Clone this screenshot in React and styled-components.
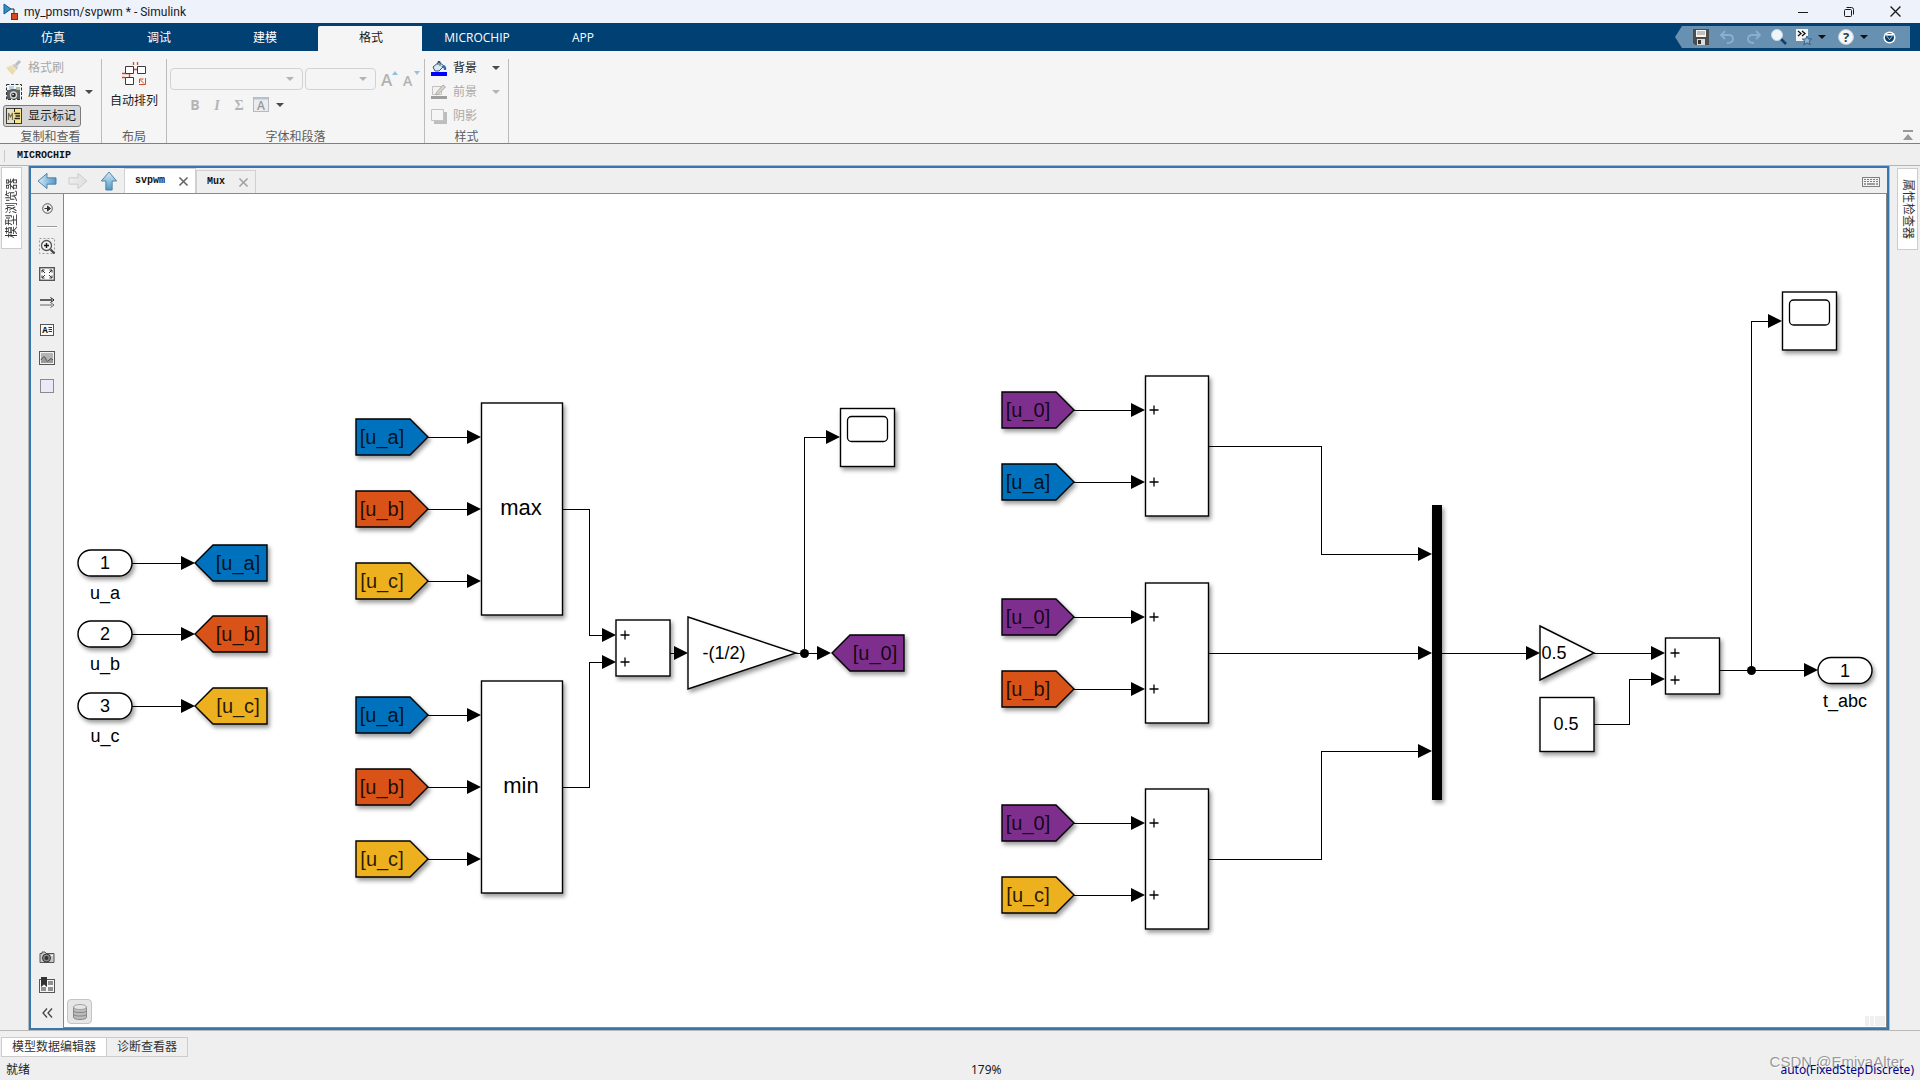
import React from "react";
import styled, { createGlobalStyle } from "styled-components";

const GlobalStyle = createGlobalStyle`
	* {
		box-sizing: border-box;
	}
	body {
		margin: 0;
		background: #efefef;
		color: #1a1a1a;
		font-family: "Open Sans", "Noto Sans CJK SC", sans-serif;
		font-size: 12px;
		line-height: 16px;
	}
	button {
		margin: 0;
		padding: 0;
		border: none;
		background: none;
		color: inherit;
		font: inherit;
		white-space: nowrap;
	}
	svg {
		display: block;
		flex-shrink: 0;
		overflow: visible;
	}
`;

const Page = styled.div`
	display: flex;
	flex-direction: column;
	min-height: 100vh;
`;

const TitleBar = styled.header`
	display: flex;
	align-items: center;
	height: 23px;
	padding: 0 2px 0 3px;
	background: #eef2fa;
`;

const Title = styled.h1`
	flex: 1;
	margin: 0 0 0 6px;
	font-family: Roboto, sans-serif;
	font-size: 12px;
	font-weight: 400;
`;

const WindowButton = styled.button`
	display: flex;
	align-items: center;
	justify-content: center;
	width: 46px;
	height: 22px;
`;

const TabBar = styled.nav`
	display: flex;
	align-items: flex-end;
	height: 28px;
	background: #004073;
`;

const RibbonTab = styled.button`
	width: 106px;
	height: 25px;
	padding: 0 0 2px 2px;
	border-radius: 2px 2px 0 0;
	border-right: 2px solid #004073;
	background: ${(props) => (props.$active ? "#f5f5f5" : "#004073")};
	color: ${(props) => (props.$active ? "#1a1a1a" : "#ffffff")};
`;

const QuickAccess = styled.div`
	display: flex;
	align-items: center;
	gap: 4px;
	height: 22px;
	margin: 0 10px 3px auto;
	padding: 0 10px 0 15px;
	background: #6890b0;
	clip-path: polygon(7px 0, 100% 0, 100% 100%, 7px 100%, 0 50%);
`;

const QuickButton = styled.button`
	display: flex;
	align-items: center;
	justify-content: center;
	gap: 6px;
	min-width: 22px;
	height: 20px;
	padding: ${(props) => (props.$menu ? "0 2px" : "0")};
`;

const Ribbon = styled.div`
	display: flex;
	height: 93px;
	padding-top: 8px;
	border-bottom: 1px solid #808080;
	background: #f5f5f5;
`;

const Group = styled.section`
	display: flex;
	flex-direction: column;
	width: ${(props) => props.$width}px;
	border-right: 1px solid #bcbcbc;
`;

const GroupBody = styled.div`
	flex: 1;
	display: flex;
	flex-direction: column;
	gap: ${(props) => props.$gap || 0}px;
	padding: ${(props) => props.$pad || "0 3px"};
`;

const GroupLabel = styled.h2`
	margin: 0;
	height: 15px;
	font-size: 12px;
	font-weight: 400;
	line-height: 18px;
	color: #5c5c5c;
	text-align: center;
`;

const RibbonRow = styled.div`
	display: flex;
	align-items: center;
	gap: ${(props) => props.$gap || 0}px;
	height: 24px;
	margin-top: ${(props) => (props.$first ? "-3px" : "0")};
`;

const ToolButton = styled.button`
	display: flex;
	align-items: center;
	gap: 6px;
	height: 22px;
	padding: 0 4px 0 2px;
	border: 1px solid ${(props) => (props.$pressed ? "#7c7c7c" : "transparent")};
	border-radius: 3px;
	background: ${(props) => (props.$pressed ? "#d6d6d6" : "transparent")};
	color: ${(props) => (props.disabled ? "#a8a8a8" : "#1a1a1a")};
`;

const BigButton = styled.button`
	display: flex;
	flex-direction: column;
	align-items: center;
	gap: 7px;
`;

const IconButton = styled.button`
	display: flex;
	align-items: center;
	justify-content: center;
	width: ${(props) => props.$width || 22}px;
	height: 22px;
`;

const SelectBox = styled.span`
	position: relative;
	width: ${(props) => props.$width}px;
`;

const Select = styled.select`
	display: block;
	width: 100%;
	height: 22px;
	border: 1px solid #c4c4c4;
	border-radius: 4px;
	background: #f5f5f5;
	appearance: none;
`;

const SelectCaret = styled.span`
	position: absolute;
	right: 9px;
	top: 9px;
`;

const RibbonEnd = styled.div`
	flex: 1;
	display: flex;
	justify-content: flex-end;
	align-items: flex-end;
	padding: 0 7px 3px 0;
`;

const Strip = styled.div`
	display: flex;
	align-items: center;
	gap: 12px;
	height: 22px;
	padding: 2px 0 0 4px;
	border-bottom: 1px solid #b4b4b4;
	font-family: "Liberation Mono", monospace;
	font-size: 10px;
	font-weight: 700;
	color: #111111;
`;

const Grip = styled.span`
	width: 1px;
	height: 12px;
	background: #c8c8c8;
`;

const Main = styled.main`
	flex: 1;
	display: flex;
	border-bottom: 1px solid #b8b8b8;
`;

const Dock = styled.aside`
	width: ${(props) => (props.$right ? 31 : 29)}px;
	padding: ${(props) => (props.$right ? "2px 2px 0 7px" : "1px 6px 0 1px")};
	border: solid #b8b8b8;
	border-width: ${(props) => (props.$right ? "0 0 0 1px" : "0 1px 0 0")};
`;

const DockTab = styled.button`
	width: 21px;
	height: 82px;
	border: 1px solid #cccccc;
	background: #ffffff;
	color: #333333;
	writing-mode: vertical-rl;
	text-orientation: sideways;
	transform: ${(props) => (props.$up ? "rotate(180deg)" : "none")};
`;

const Editor = styled.section`
	flex: 1;
	display: flex;
	flex-direction: column;
	min-width: 0;
	border: 2px solid #3577ae;
`;

const EditorBar = styled.div`
	display: flex;
	align-items: flex-end;
	height: 26px;
	padding-right: 7px;
	border-bottom: 1px solid #888a8f;
`;

const NavButton = styled.button`
	display: flex;
	align-items: center;
	justify-content: center;
	width: 31px;
	height: 24px;
`;

const FileTab = styled.button`
	display: flex;
	align-items: center;
	gap: 14px;
	height: ${(props) => (props.$active ? 25 : 23)}px;
	padding: 0 7px 0 10px;
	border: 1px solid #d0d0d0;
	border-bottom: none;
	background: ${(props) => (props.$active ? "#ffffff" : "#efefef")};
	font-family: "Liberation Mono", monospace;
	font-size: 10px;
	font-weight: 700;
	color: #111111;
`;

const BarEnd = styled.div`
	flex: 1;
	display: flex;
	justify-content: flex-end;
	padding-bottom: 6px;
`;

const EditorBody = styled.div`
	flex: 1;
	display: flex;
`;

const Palette = styled.div`
	display: flex;
	flex-direction: column;
	align-items: center;
	width: 32px;
	padding-bottom: 1px;
`;

const PaletteButton = styled.button`
	display: flex;
	align-items: center;
	justify-content: center;
	width: 28px;
	height: 28px;
`;

const PaletteLine = styled.span`
	width: 20px;
	height: 2px;
	margin: 4px 0;
	border-top: 1px solid #9c9c9c;
	background: #ffffff;
`;

const Spacer = styled.span`
	flex: 1;
`;

const Sheet = styled.div`
	position: relative;
	flex: 1;
	display: flex;
	min-width: 0;
	min-height: 780px;
	border: 1px solid #85858a;
	border-top: none;
	background: #ffffff;
`;

const Diagram = styled.svg`
	flex: 1;
	min-width: 0;
	overflow: hidden;
	font-family: "Liberation Sans", Arial, sans-serif;
	text-anchor: middle;
`;

const Shadow = styled.g`
	fill: #ffffff;
	stroke: #000000;
	stroke-width: 1.4;
	filter: drop-shadow(2px 3px 2px rgba(0, 0, 0, 0.4));
`;

const DataButton = styled.button`
	position: absolute;
	left: 3px;
	bottom: 3px;
	display: flex;
	align-items: center;
	justify-content: center;
	width: 25px;
	height: 25px;
	border: 1px solid #c4c4c4;
	border-radius: 4px;
	background: #e6e6e6;
`;

const Corner = styled.div`
	position: absolute;
	right: 1px;
	bottom: 1px;
	display: grid;
	grid-template-columns: 4px 4px 10px;
	gap: 1px;
	height: 10px;
`;

const CornerCell = styled.span`
	background: #f0f0f0;
`;

const BottomTabs = styled.div`
	display: flex;
	padding: 6px 0 0 1px;
`;

const BottomTab = styled.button`
	height: 20px;
	padding: 0 10px;
	border: 1px solid #cccccc;
	margin-right: -1px;
	background: ${(props) => (props.$active ? "#ffffff" : "#efefef")};
	color: #333333;
`;

const StatusBar = styled.footer`
	position: relative;
	display: grid;
	grid-template-columns: 1fr 1fr;
	align-items: center;
	height: 23px;
	padding: 2px 6px 0;
	font-family: "Noto Sans", "Noto Sans CJK SC", sans-serif;
`;

const StatusRight = styled.div`
	display: flex;
	justify-content: space-between;
	padding-left: 11px;
`;

const Solver = styled.a`
	z-index: 1;
	color: #00008b;
	text-decoration: none;
`;

const Watermark = styled.span`
	position: absolute;
	right: 16px;
	top: -3px;
	color: #9a9a9a;
	font-family: "Liberation Sans", Arial, sans-serif;
	font-size: 15px;
	text-shadow: 1px 1px 0 #ffffff;
	pointer-events: none;
`;

const BLUE = "#0072bd";
const ORANGE = "#d95319";
const YELLOW = "#edb120";
const PURPLE = "#7e2f8e";

const COLORS = { u_a: BLUE, u_b: ORANGE, u_c: YELLOW, u_0: PURPLE };

const Caret = ({ color = "#4a4a4a", w = 8 }) => (
	<svg width={w} height={w / 2} viewBox="0 0 8 4">
		<path d="M0 0h8L4 4z" fill={color} />
	</svg>
);

/* ---------- diagram parts ---------- */

const From = ({ x, y, name }) => (
	<>
		<Shadow>
			<path d={`M${x} ${y - 18}h54l18 18l-18 18h-54z`} style={{ fill: COLORS[name] }} />
		</Shadow>
		<text x={x + 26} y={y + 7} fontSize="20" fillOpacity="0.85">
			[{name}]
		</text>
	</>
);

const Goto = ({ x, y, name }) => (
	<>
		<Shadow>
			<path d={`M${x} ${y}l18 -18h54v36h-54z`} style={{ fill: COLORS[name] }} />
		</Shadow>
		<text x={x + 43} y={y + 7} fontSize="20" fillOpacity="0.85">
			[{name}]
		</text>
	</>
);

const Port = ({ x, y, n, label }) => (
	<>
		<Shadow>
			<rect x={x} y={y - 13} width="54" height="26" rx="13" />
		</Shadow>
		<text x={x + 27} y={y + 6} fontSize="18">
			{n}
		</text>
		<text x={x + 27} y={y + 36} fontSize="18">
			{label}
		</text>
	</>
);

const Block = ({ x, y, w, h, text, size = 18 }) => (
	<>
		<Shadow>
			<rect x={x} y={y} width={w} height={h} />
		</Shadow>
		{text && (
			<text x={x + w / 2 - 1} y={y + h / 2 + Math.round(size / 3) - 1} fontSize={size}>
				{text}
			</text>
		)}
	</>
);

const Plus = ({ x, y }) => <path d={`M${x - 4.5} ${y}h9M${x} ${y - 4.5}v9`} stroke="#000" strokeWidth="1.3" />;

const Gain = ({ x, y, w, h, text, tx }) => (
	<>
		<Shadow>
			<path d={`M${x} ${y - h / 2}L${x + w} ${y}L${x} ${y + h / 2}z`} />
		</Shadow>
		<text x={tx} y={y + 6} fontSize="18">
			{text}
		</text>
	</>
);

const Scope = ({ x, y }) => (
	<>
		<Block x={x} y={y} w={54} h={58} />
		<rect x={x + 7} y={y + 8} width="40" height="25" rx="4" fill="none" stroke="#000" strokeWidth="1.3" />
	</>
);

// wire is a path ending at the tip (x, y) of the arrow head
const Wire = ({ d, x, y }) => (
	<>
		<path d={`${d}H${x - 10}`} fill="none" stroke="#000" shapeRendering="crispEdges" />
		<path d={`M${x} ${y}l-14 -7v14z`} fill="#000" />
	</>
);

const GROUPS = [
	{ y: 437, text: "max" },
	{ y: 715, text: "min" },
];

const SUMS = [
	{ y: 410, name: "u_a" },
	{ y: 617, name: "u_b" },
	{ y: 823, name: "u_c" },
];

const Model = () => (
	<Diagram role="img" aria-label="svpwm">
		{/* window coordinates, moved to the corner of the sheet */}
		<g transform="translate(-64 -194)">
			{["u_a", "u_b", "u_c"].map((name, i) => {
				const y = 563 + Math.floor(i * 71.7);
				return (
					<g key={name}>
						<Port x={78} y={y} n={i + 1} label={name} />
						<Wire d={`M132 ${y + 0.5}`} x={195} y={y} />
						<Goto x={195} y={y} name={name} />
					</g>
				);
			})}

			{GROUPS.map(({ y, text }) => (
				<g key={text}>
					<Block x={481.5} y={y - 34} w={81} h={212} text={text} size={22} />
					{["u_a", "u_b", "u_c"].map((name, i) => (
						<g key={name}>
							<From x={356} y={y + i * 72} name={name} />
							<Wire d={`M428 ${y + i * 72 + 0.5}`} x={481} y={y + i * 72} />
						</g>
					))}
				</g>
			))}

			<Wire d="M563 509.5H589.5V635.5" x={616} y={635} />
			<Wire d="M563 787.5H589.5V662.5" x={616} y={662} />
			<Block x={616} y={620} w={54} h={56} />
			<Plus x={625} y={635} />
			<Plus x={625} y={662} />
			<Wire d="M670 653.5" x={688} y={653} />
			<Gain x={688} y={653} w={108} h={72} text="-(1/2)" tx={724} />
			<Wire d="M796 653.5" x={831} y={653} />
			<Wire d="M804.5 653.5V437.5" x={840} y={437} />
			<circle cx="804.5" cy="653.5" r="4.5" />
			<Goto x={832} y={653} name="u_0" />
			<Scope x={840.5} y={408.5} />

			{SUMS.map(({ y, name }) => (
				<g key={name}>
					<Block x={1145.5} y={y - 34} w={63} h={140} />
					<From x={1002} y={y} name="u_0" />
					<From x={1002} y={y + 72} name={name} />
					<Wire d={`M1074 ${y + 0.5}`} x={1145} y={y} />
					<Wire d={`M1074 ${y + 72.5}`} x={1145} y={y + 72} />
					<Plus x={1154} y={y} />
					<Plus x={1154} y={y + 72} />
				</g>
			))}

			<Shadow>
				<rect x={1432} y={505} width="10" height="295" style={{ fill: "#000000", stroke: "none" }} />
			</Shadow>
			<Wire d="M1209 446.5H1321.5V554.5" x={1432} y={554} />
			<Wire d="M1209 653.5" x={1432} y={653} />
			<Wire d="M1209 859.5H1321.5V751.5" x={1432} y={751} />

			<Wire d="M1442 653.5" x={1540} y={653} />
			<Gain x={1540} y={653} w={54} h={54} text="0.5" tx={1554} />
			<Block x={1540} y={697.5} w={54} h={54} text="0.5" />
			<Wire d="M1594 653.5" x={1665} y={653} />
			<Wire d="M1594 724.5H1629.5V679.5" x={1665} y={679} />
			<Block x={1665.5} y={638} w={54} h={56} />
			<Plus x={1675} y={653} />
			<Plus x={1675} y={680} />
			<Wire d="M1720 670.5" x={1818} y={670} />
			<Wire d="M1751.5 670.5V321.5" x={1782} y={321} />
			<circle cx="1751.5" cy="670.5" r="4.5" />
			<Port x={1818} y={670.5} n={1} label="t_abc" />
			<Scope x={1782.5} y={292} />
		</g>
	</Diagram>
);

/* ---------- icons ---------- */

const LogoIcon = () => (
	<svg width="15" height="17" viewBox="0 0 15 17">
		<path d="M1 1l7 5l-7 5z" fill="#2f8fc4" stroke="#175a86" />
		<path d="M8 6h3v5" fill="none" stroke="#222" />
		<rect x="8.500" y="10.500" width="6" height="6" fill="#d84a1b" stroke="#842a0c" />
	</svg>
);

const CloseIcon = ({ size = 11, color = "#1a1a1a", width = 1.2 }) => (
	<svg width={size} height={size} viewBox="0 0 10 10">
		<path d="M.5 .5l9 9M9.500 .5l-9 9" stroke={color} strokeWidth={width} />
	</svg>
);

const BrushIcon = () => (
	<svg width="16" height="16" viewBox="0 0 16 16">
		<path d="M0 7l6-2l5 4l-4 6q-4-2-7-8z" fill="#efe3bd" />
		<path d="M2 8l5 6M4 7l4 5" stroke="#ddcf9f" />
		<path d="M6 5l3-1l3 3l-1 3z" fill="#c9c9c9" />
		<path d="M10 5l4-4" stroke="#b9bec4" strokeWidth="3" />
	</svg>
);

const CameraIcon = () => (
	<svg width="16" height="16" viewBox="0 0 16 16">
		<rect x=".5" y=".5" width="15" height="15" fill="#f3f5f6" stroke="#333" strokeDasharray="3 1.500" />
		<path d="M3 2h5v4H3z" fill="#b5d6e8" />
		<path d="M10 3h4v3h-4z" fill="#a9c98e" />
		<path d="M1 6h3l1-1h5l1 1h3v9H1z" fill="#5e6266" />
		<circle cx="7.500" cy="11" r="3.700" fill="#d8d8d8" />
		<circle cx="7.500" cy="11" r="2.300" fill="#2a2d30" />
		<circle cx="7" cy="10.500" r=".8" fill="#fff" />
	</svg>
);

const MarkupIcon = () => (
	<svg width="16" height="16" viewBox="0 0 16 16">
		<rect x=".5" y=".5" width="15" height="15" fill="#fbe58c" stroke="#3c3c3c" />
		<path d="M1 1h7v14H1z" fill="#e9e0bd" />
		<path d="M2.500 12V5l2 4l2-4v7" fill="none" stroke="#77735f" strokeWidth="1.200" />
		<path d="M8.500 0v4M8.500 12v4" stroke="#222" />
		<path d="M8.500 5.500h5.500M9.500 8h4.500M8.500 10.500h5.500" stroke="#222" strokeWidth="1.300" />
	</svg>
);

const ArrangeIcon = () => (
	<svg width="24" height="24" viewBox="0 0 24 24">
		<path d="M11.500 0v3M15.500 0v3M0 11.500h7.500v4M12 7.500h3M0 15.500h3" fill="none" stroke="#d84a1b" strokeWidth="1.300" />
		<path d="M3.500 4.500h8v7h-8zM15.500 4.500h8v7h-8zM3.500 15.500h8v7h-8z" fill="#fff" stroke="#3a3a3a" />
		<path d="M23.500 16v6.500H17M17.500 21v-4h4M18 17.500l4 4" fill="none" stroke="#d84a1b" />
	</svg>
);

const PaintIcon = () => (
	<svg width="16" height="17" viewBox="0 0 16 17">
		<path d="M2 7l6-5l5 4l-5 5H4z" fill="#dbe8f3" stroke="#33506e" />
		<path d="M7 5V1.500h2V6" fill="none" stroke="#33506e" />
		<path d="M13 5q3 2 2 5h-2q0-3-3-3z" fill="#2b6fb5" />
		<rect y="12" width="16" height="4" fill="#0000ff" />
	</svg>
);

const PenIcon = () => (
	<svg width="16" height="17" viewBox="0 0 16 17">
		<path d="M1.500 2.500h9v8h-9z" fill="#f2f2f2" stroke="#c2c2c2" />
		<path d="M5 9l7-8l2.500 2L7.500 10L5 11z" fill="#ded2c4" stroke="#adadad" />
		<rect y="12" width="16" height="3" fill="#9e9e9e" />
	</svg>
);

const ShadowIcon = () => (
	<svg width="16" height="17" viewBox="0 0 16 17">
		<path d="M3 4h13v12H3z" fill="#bdbdbd" />
		<path d="M.5 1.500h12v11H.5z" fill="#f5f5f5" stroke="#c2c2c2" />
	</svg>
);

const FontIcon = ({ size, up }) => (
	<svg width="17" height="16" viewBox="0 0 17 16">
		<text x="0" y="15" fontSize={size} fontWeight="600" fill="#b2b2b2">
			A
		</text>
		<path d={up ? "M11 4l3-4l3 4z" : "M11 0h6l-3 4z"} fill="#8fc3dc" />
	</svg>
);

const GlyphIcon = ({ children, italic, serif }) => (
	<svg width="14" height="16" viewBox="0 0 14 16">
		<text
			x="7"
			y="13"
			fontSize="14"
			textAnchor="middle"
			fontWeight="700"
			fontStyle={italic ? "italic" : "normal"}
			fontFamily={serif ? "Liberation Serif, serif" : "Open Sans, sans-serif"}
			fill="#b4b4b4"
		>
			{children}
		</text>
	</svg>
);

const TextBoxIcon = () => (
	<svg width="16" height="16" viewBox="0 0 16 16">
		<rect x=".5" y=".5" width="15" height="14" fill="#ececef" stroke="#b4b9c2" />
		<path d="M1 1.500h14" stroke="#b4c4d4" strokeWidth="2" />
		<text x="8" y="13" fontSize="12" textAnchor="middle" fontWeight="600" fill="#999">
			A
		</text>
	</svg>
);

const SaveIcon = () => (
	<svg width="16" height="16" viewBox="0 0 16 16">
		<path d="M0 0h16v16H2l-2-2z" fill="#4c4c4c" />
		<path d="M3 1h10v7H3z" fill="#f4f4f4" />
		<path d="M4 3h8M4 5h8" stroke="#8a8a8a" />
		<path d="M4 10h8v6H4z" fill="#dcdcdc" />
		<path d="M5 11h3v4H5z" fill="#333" />
	</svg>
);

const UndoIcon = ({ flip }) => (
	<svg width="15" height="14" viewBox="0 0 15 14">
		<path
			d="M5 1L1 5l4 4M1 5h8q4 0 4 4q0 4-6 4"
			transform={flip ? "translate(15 0) scale(-1 1)" : undefined}
			fill="none"
			stroke="#8bb0cc"
			strokeWidth="1.800"
		/>
	</svg>
);

const SearchIcon = () => (
	<svg width="16" height="16" viewBox="0 0 16 16">
		<path d="M9 9l6 6" stroke="#123f6b" strokeWidth="2.500" />
		<circle cx="6" cy="6" r="5.500" fill="#eef6fa" stroke="#c9d9e4" />
	</svg>
);

const FavoriteIcon = () => (
	<svg width="16" height="17" viewBox="0 0 16 17">
		<path d="M0 0h12v12H0z" fill="#f5f5f5" />
		<path d="M2 2l3 2.500l-3 2.500M6 2l3 2.500l-3 2.500" fill="none" stroke="#111" strokeWidth="1.300" />
		<path d="M11 7l1.400 3h3.300l-2.500 2.200l1 3.600l-3.200-2l-3.200 2l1-3.600L6.300 10h3.300z" fill="#8fb3d1" stroke="#33608a" />
	</svg>
);

const HelpIcon = () => (
	<svg width="16" height="16" viewBox="0 0 16 16">
		<circle cx="8" cy="8" r="7.500" fill="#f4f6f8" stroke="#c2ccd5" />
		<text x="8" y="12.500" fontSize="13" fontWeight="700" textAnchor="middle" fill="#2e3f50">
			?
		</text>
	</svg>
);

const MenuIcon = () => (
	<svg width="13" height="13" viewBox="0 0 13 13">
		<circle cx="6.500" cy="6.500" r="6" fill="#fff" />
		<circle cx="6.500" cy="6.500" r="4.500" fill="#004073" />
		<path d="M3 4.500h7l-3.500 4.500z" fill="#fff" />
		<path d="M4 5h5l-2.500 3.200z" fill="#004073" />
		<path d="M2.500 3.500h8" stroke="#fff" strokeWidth="1.500" />
	</svg>
);

const ArrowIcon = ({ dir }) => {
	const angle = { left: 180, right: 0, up: -90 }[dir];
	const off = dir === "right";
	return (
		<svg width="20" height="20" viewBox="0 0 20 20">
			<defs>
				<linearGradient id={`nav-${dir}`} x1="0" y1="0" x2="1" y2="0">
					<stop offset="0" stopColor={off ? "#eeeeee" : "#4f97c8"} />
					<stop offset="1" stopColor={off ? "#dedede" : "#d4ecf8"} />
				</linearGradient>
			</defs>
			<path
				d="M1 6.500h9v-5l9 8.500l-9 8.500v-5H1z"
				transform={`rotate(${angle} 10 10) translate(0 1) scale(1 .9)`}
				fill={`url(#nav-${dir})`}
				stroke={off ? "#c9c9c9" : "#4e7ea0"}
			/>
		</svg>
	);
};

const KeyboardIcon = () => (
	<svg width="18" height="10" viewBox="0 0 18 10">
		<rect x=".5" y=".5" width="17" height="9" fill="#f2f2f2" stroke="#808080" />
		<path d="M2 2.500h14M2 4.500h14" stroke="#808080" strokeWidth="1.200" strokeDasharray="2 1" />
		<path d="M2 7h2M5 7h8M14 7h2" stroke="#808080" strokeWidth="1.400" />
	</svg>
);

const HideIcon = () => (
	<svg width="11" height="11" viewBox="0 0 11 11">
		<circle cx="5.500" cy="5.500" r="4.800" fill="none" stroke="#555" />
		<path d="M2.500 5.500h4M5.500 3l3 2.500l-3 2.500z" fill="#333" stroke="#333" />
	</svg>
);

const ZoomIcon = () => (
	<svg width="17" height="17" viewBox="0 0 17 17">
		<rect x=".5" y=".5" width="15" height="15" fill="none" stroke="#999" strokeDasharray="2 2" />
		<circle cx="7.500" cy="7.500" r="5" fill="#f2f2f2" stroke="#555" strokeWidth="1.300" />
		<path d="M5 7.500h5M7.500 5v5" stroke="#111" strokeWidth="1.400" />
		<path d="M11.500 11.500l4 4" stroke="#444" strokeWidth="2.200" />
	</svg>
);

const FitIcon = () => (
	<svg width="16" height="14" viewBox="0 0 16 14">
		<rect x=".7" y=".7" width="14.600" height="12.600" fill="#fafafa" stroke="#555" strokeWidth="1.400" />
		<path
			d="M3 5.500V3h2.500M3 3l3 3M13 5.500V3h-2.500M13 3l-3 3M3 8.500V11h2.500M3 11l3-3M13 8.500V11h-2.500M13 11l-3-3"
			fill="none"
			stroke="#333"
		/>
	</svg>
);

const LinesIcon = () => (
	<svg width="15" height="11" viewBox="0 0 15 11">
		<path d="M0 3h12" stroke="#111" strokeWidth="1.300" />
		<path d="M10.500 .5l3.500 2.500l-3.500 2.500" fill="none" stroke="#111" />
		<path d="M0 8h12" stroke="#666" />
		<path d="M10.500 5.500l3.500 2.500l-3.500 2.500" fill="none" stroke="#666" />
	</svg>
);

const NoteIcon = () => (
	<svg width="14" height="12" viewBox="0 0 14 12">
		<rect x=".5" y=".5" width="13" height="11" fill="#fafafa" stroke="#555" />
		<text x="5" y="9" fontSize="8" fontWeight="700" textAnchor="middle" fill="#111">
			A
		</text>
		<path d="M8.500 3.500H12M8.500 5.500H12M8.500 7.500H12" stroke="#333" />
	</svg>
);

const ImageIcon = () => (
	<svg width="16" height="14" viewBox="0 0 16 14">
		<rect x=".5" y=".5" width="15" height="13" fill="#f2f2f2" stroke="#555" />
		<rect x="2" y="2" width="12" height="10" fill="#b4b4b4" />
		<path d="M2 9q3-6 5-1q1 4 3 1q2-3 4 0v3H2z" fill="#9a9a9a" />
		<path d="M2 9q3-6 5-1q1 4 3 1q2-3 4 0" fill="none" stroke="#555" />
	</svg>
);

const AreaIcon = () => (
	<svg width="14" height="14" viewBox="0 0 14 14">
		<rect x=".5" y=".5" width="13" height="13" fill="#e9e9f8" stroke="#8a8a92" />
	</svg>
);

const PhotoIcon = () => (
	<svg width="16" height="13" viewBox="0 0 16 13">
		<path d="M1 2.500h2V1h3l1 1.500h8v9H1z" fill="#c9c9c9" stroke="#555" />
		<circle cx="7.500" cy="7" r="4" fill="#888" stroke="#333" />
		<circle cx="7.500" cy="7" r="2" fill="#333" />
		<path d="M12 4.500h2" stroke="#fff" />
	</svg>
);

const BookIcon = () => (
	<svg width="16" height="16" viewBox="0 0 16 16">
		<rect x=".5" y="2.500" width="15" height="13" fill="#f6f6f6" stroke="#555" />
		<path d="M9 4h5v4H9zM2 10h5v4H2zM9 10h5v4H9z" fill="#909090" />
		<path d="M2 0h6v10L5 7.500L2 10z" fill="#333" />
	</svg>
);

const CollapseIcon = () => (
	<svg width="11" height="10" viewBox="0 0 11 10">
		<path d="M5 .5L1 5l4 4.500M10 .5L6 5l4 4.500" fill="none" stroke="#444" strokeWidth="1.300" />
	</svg>
);

const DataIcon = () => (
	<svg width="14" height="16" viewBox="0 0 14 16">
		<path d="M.5 3v10q0 2.500 6.500 2.500T13.500 13V3" fill="#bcbcbc" stroke="#8a8a8a" />
		<ellipse cx="7" cy="3" rx="6.500" ry="2.500" fill="#e6e6e6" stroke="#a2a2a2" />
		<path d="M.5 6.500q0 2 6.500 2t6.500-2M.5 10q0 2 6.500 2t6.500-2" fill="none" stroke="#858585" />
	</svg>
);

const TABS = ["仿真", "调试", "建模", "格式", "MICROCHIP", "APP"];

const TOOLS = [
	["适应视图", FitIcon],
	["采样时间", LinesIcon],
	["注释", NoteIcon],
	["图像", ImageIcon],
	["区域", AreaIcon],
];

export default () => {
	return (
		<>
			<GlobalStyle />
			<Page>
				<TitleBar>
					<LogoIcon />
					<Title>my_pmsm/svpwm * - Simulink</Title>
					<WindowButton aria-label="最小化">
						<svg width="10" height="10" viewBox="0 0 10 10">
							<path d="M0 5.500h10" stroke="#1a1a1a" />
						</svg>
					</WindowButton>
					<WindowButton aria-label="还原">
						<svg width="10" height="10" viewBox="0 0 10 10">
							<rect x=".5" y="2.500" width="7" height="7" rx="1" fill="none" stroke="#1a1a1a" />
							<path d="M2.500 .5h5q2 0 2 2v5" fill="none" stroke="#1a1a1a" />
						</svg>
					</WindowButton>
					<WindowButton aria-label="关闭">
						<CloseIcon />
					</WindowButton>
				</TitleBar>

				<TabBar>
					{TABS.map((t) => (
						<RibbonTab key={t} $active={t === "格式"}>
							{t}
						</RibbonTab>
					))}
					<QuickAccess>
						<QuickButton aria-label="保存">
							<SaveIcon />
						</QuickButton>
						<QuickButton aria-label="撤销">
							<UndoIcon />
						</QuickButton>
						<QuickButton aria-label="重做">
							<UndoIcon flip />
						</QuickButton>
						<QuickButton aria-label="搜索">
							<SearchIcon />
						</QuickButton>
						<QuickButton aria-label="收藏" $menu>
							<FavoriteIcon />
							<Caret color="#111111" />
						</QuickButton>
						<Spacer />
						<QuickButton aria-label="帮助" $menu>
							<HelpIcon />
							<Caret color="#111111" />
						</QuickButton>
						<Spacer />
						<QuickButton aria-label="菜单">
							<MenuIcon />
						</QuickButton>
					</QuickAccess>
				</TabBar>

				<Ribbon>
					<Group $width={102}>
						<GroupBody>
							<RibbonRow $first>
								<ToolButton disabled>
									<BrushIcon />
									格式刷
								</ToolButton>
							</RibbonRow>
							<RibbonRow $gap={4}>
								<ToolButton>
									<CameraIcon />
									屏幕截图
								</ToolButton>
								<Caret />
							</RibbonRow>
							<RibbonRow>
								<ToolButton $pressed>
									<MarkupIcon />
									显示标记
								</ToolButton>
							</RibbonRow>
						</GroupBody>
						<GroupLabel>复制和查看</GroupLabel>
					</Group>
					<Group $width={65}>
						<GroupBody $pad="3px 0 0">
							<BigButton>
								<ArrangeIcon />
								自动排列
							</BigButton>
						</GroupBody>
						<GroupLabel>布局</GroupLabel>
					</Group>
					<Group $width={258}>
						<GroupBody $pad="11px 0 0 3px" $gap={2}>
							<RibbonRow $first $gap={2}>
								<SelectBox $width={133}>
									<Select aria-label="字体" disabled />
									<SelectCaret>
										<Caret color="#b4b4b4" />
									</SelectCaret>
								</SelectBox>
								<SelectBox $width={71}>
									<Select aria-label="字号" disabled />
									<SelectCaret>
										<Caret color="#b4b4b4" />
									</SelectCaret>
								</SelectBox>
								<IconButton aria-label="增大字号" disabled>
									<FontIcon size={17} up />
								</IconButton>
								<IconButton $width={18} aria-label="减小字号" disabled>
									<FontIcon size={14} />
								</IconButton>
							</RibbonRow>
							<RibbonRow>
								<IconButton $width={14} as="span" />
								<IconButton aria-label="粗体" disabled>
									<GlyphIcon>B</GlyphIcon>
								</IconButton>
								<IconButton aria-label="斜体" disabled>
									<GlyphIcon italic serif>
										I
									</GlyphIcon>
								</IconButton>
								<IconButton aria-label="公式" disabled>
									<GlyphIcon serif>Σ</GlyphIcon>
								</IconButton>
								<IconButton aria-label="文本框" disabled>
									<TextBoxIcon />
								</IconButton>
								<IconButton $width={16} aria-label="更多">
									<Caret />
								</IconButton>
							</RibbonRow>
						</GroupBody>
						<GroupLabel>字体和段落</GroupLabel>
					</Group>
					<Group $width={84}>
						<GroupBody>
							<RibbonRow $first $gap={10}>
								<ToolButton>
									<PaintIcon />
									背景
								</ToolButton>
								<Caret />
							</RibbonRow>
							<RibbonRow $gap={10}>
								<ToolButton disabled>
									<PenIcon />
									前景
								</ToolButton>
								<Caret color="#b4b4b4" />
							</RibbonRow>
							<RibbonRow>
								<ToolButton disabled>
									<ShadowIcon />
									阴影
								</ToolButton>
							</RibbonRow>
						</GroupBody>
						<GroupLabel>样式</GroupLabel>
					</Group>
					<RibbonEnd>
						<button aria-label="折叠工具条">
							<svg width="10" height="10" viewBox="0 0 10 10">
								<path d="M0 0h10v2H0zM5 4l5 6H0z" fill="#999999" />
							</svg>
						</button>
					</RibbonEnd>
				</Ribbon>

				<Strip>
					<Grip />
					MICROCHIP
				</Strip>

				<Main>
					<Dock>
						<DockTab $up>模型浏览器</DockTab>
					</Dock>
					<Editor>
						<EditorBar>
							<NavButton aria-label="后退">
								<ArrowIcon dir="left" />
							</NavButton>
							<NavButton aria-label="前进">
								<ArrowIcon dir="right" />
							</NavButton>
							<NavButton aria-label="向上">
								<ArrowIcon dir="up" />
							</NavButton>
							<FileTab $active>
								svpwm
								<CloseIcon size={9} color="#666666" width={1.8} />
							</FileTab>
							<FileTab>
								Mux
								<CloseIcon size={9} color="#a2a2a2" width={1.8} />
							</FileTab>
							<BarEnd>
								<KeyboardIcon />
							</BarEnd>
						</EditorBar>
						<EditorBody>
							<Palette>
								<PaletteButton aria-label="隐藏浏览器">
									<HideIcon />
								</PaletteButton>
								<PaletteLine />
								<PaletteButton aria-label="放大">
									<ZoomIcon />
								</PaletteButton>
								{TOOLS.map(([label, Icon]) => (
									<PaletteButton key={label} aria-label={label}>
										<Icon />
									</PaletteButton>
								))}
								<Spacer />
								<PaletteButton aria-label="截图">
									<PhotoIcon />
								</PaletteButton>
								<PaletteButton aria-label="书签">
									<BookIcon />
								</PaletteButton>
								<PaletteButton aria-label="收起">
									<CollapseIcon />
								</PaletteButton>
							</Palette>
							<Sheet>
								<Model />
								<DataButton aria-label="数据">
									<DataIcon />
								</DataButton>
								<Corner>
									<CornerCell />
									<CornerCell />
									<CornerCell />
								</Corner>
							</Sheet>
						</EditorBody>
					</Editor>
					<Dock $right>
						<DockTab>属性检查器</DockTab>
					</Dock>
				</Main>

				<BottomTabs>
					<BottomTab $active>模型数据编辑器</BottomTab>
					<BottomTab>诊断查看器</BottomTab>
				</BottomTabs>
				<StatusBar>
					<Watermark>CSDN @EmiyaAlter</Watermark>
					<span>就绪</span>
					<StatusRight>
						<span>179%</span>
						<Solver href="#solver">auto(FixedStepDiscrete)</Solver>
					</StatusRight>
				</StatusBar>
			</Page>
		</>
	);
};
